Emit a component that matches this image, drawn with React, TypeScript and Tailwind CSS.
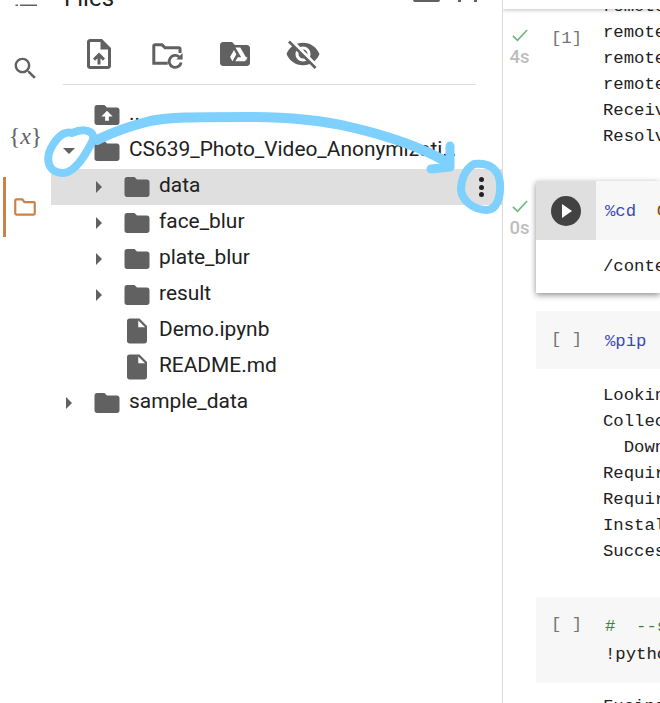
import React from 'react';

const ICON = '#616161';

function Icon({ d, size = 30, color = ICON }: { d: string; size?: number; color?: string }) {
  return (
    <svg width={size} height={size} viewBox="0 0 24 24" fill={color} className="shrink-0">
      <path d={d} />
    </svg>
  );
}

const FOLDER = 'M10 4H4c-1.1 0-2 .9-2 2v12c0 1.1.9 2 2 2h16c1.1 0 2-.9 2-2V8c0-1.1-.9-2-2-2h-8l-2-2z';
const FILE = 'M14 2H6c-1.1 0-2 .9-2 2v16c0 1.1.9 2 2 2h12c1.1 0 2-.9 2-2V8l-6-6zm-1 7V3.5L18.5 9H13z';
const UPLOAD = 'M14 2H6c-1.1 0-1.99.9-1.99 2L4 20c0 1.1.89 2 1.99 2H18c1.1 0 2-.9 2-2V8l-6-6zm4 18H6V4h7v5h5v11zM8 15.01l1.41 1.41L11 14.84V19h2v-4.16l1.59 1.59L16 15.01 12.01 11z';
const EYE_OFF = 'M12 7c2.76 0 5 2.24 5 5 0 .65-.13 1.26-.36 1.83l2.92 2.92c1.51-1.26 2.7-2.89 3.43-4.75-1.73-4.39-6-7.5-11-7.5-1.4 0-2.74.25-3.98.7l2.16 2.16C10.74 7.13 11.35 7 12 7zM2 4.27l2.28 2.28.46.46C3.08 8.3 1.78 10.02 1 12c1.73 4.39 6 7.5 11 7.5 1.55 0 3.03-.3 4.38-.84l.42.42L19.73 22 21 20.73 3.27 3 2 4.27zM7.53 9.8l1.55 1.55c-.05.21-.08.43-.08.65 0 1.66 1.34 3 3 3 .22 0 .44-.03.65-.08l1.55 1.55c-.67.33-1.41.53-2.2.53-2.76 0-5-2.24-5-5 0-.79.2-1.53.53-2.2zm4.31-.78l3.15 3.15.02-.16c0-1.66-1.34-3-3-3l-.17.01z';
const SEARCH = 'M15.5 14h-.79l-.28-.27C15.41 12.59 16 11.11 16 9.5 16 5.91 13.09 3 9.5 3S3 5.91 3 9.5 5.91 16 9.5 16c1.61 0 3.09-.59 4.23-1.57l.27.28v.79l5 4.99L20.49 19l-4.99-5zm-6 0C7.01 14 5 11.99 5 9.5S7.01 5 9.5 5 14 7.01 14 9.5 11.99 14 9.5 14z';

function Rail() {
  return (
    <div className="w-[51px] shrink-0 flex flex-col bg-white">
      <div className="h-[68px] mt-[-34px] flex items-center justify-center">
        <svg width="24" height="24" viewBox="0 0 24 24" fill={ICON}>
          <rect x="6" y="16.5" width="17" height="1.5" />
          <rect x="1.5" y="16.5" width="2.5" height="1.5" />
          <rect x="6" y="10" width="17" height="1.5" />
        </svg>
      </div>
      <div className="h-[68px] flex items-center justify-center">
        <Icon d={SEARCH} size={29} />
      </div>
      <div className="h-[68px] flex items-center justify-center">
        <span className="text-[24px] text-[#5f6368] font-['Liberation_Serif',serif]">
          {'{'}<span className="italic">x</span>{'}'}
        </span>
      </div>
      <div className="h-[60px] mt-[7px] ml-[3px] border-l-[3px] border-[#c9824a] flex items-center pl-[6px]">
        <svg width="26" height="26" viewBox="0 0 24 24" fill="none" stroke="#c9824a" strokeWidth="2">
          <path d="M3 7V6c0-.6.4-1 1-1h5.5l2 2.5H20c.6 0 1 .4 1 1V18c0 .6-.4 1-1 1H4c-.6 0-1-.4-1-1V7z" />
        </svg>
      </div>
    </div>
  );
}

function Toolbar() {
  return (
    <div className="flex items-center h-[36px] mt-[36px] ml-[14px]">
      <div className="w-[68px] flex justify-center">
        <Icon d={UPLOAD} size={36} />
      </div>
      <div className="w-[68px] flex justify-center">
        <svg width="36" height="36" viewBox="0 0 24 24" className="shrink-0">
          <path d="M12.5 18.2H3.2V6.8c0-.5.4-.9.9-.9h4.6l2 2h9.1c.5 0 .9.4.9.9v2.6" fill="none" stroke={ICON} strokeWidth="2" />
          <path d="M21.4 17.6a4 4 0 1 1-1.2-3.6" fill="none" stroke={ICON} strokeWidth="1.9" />
          <path d="M22.4 11.4v4.2h-4.2z" fill={ICON} />
        </svg>
      </div>
      <div className="w-[68px] flex justify-center">
        <svg width="36" height="36" viewBox="0 0 24 24" className="shrink-0">
          <path d={FOLDER} fill={ICON} />
          <path d="M12.3 7.6h3.2l4.7 8h-3.2zM11.3 9.4l1.6 2.8-2.6 4.6-1.6-2.8zM12.2 16.9l1.7-2.8h6.5l-1.7 2.8z" fill="#fff" />
        </svg>
      </div>
      <div className="w-[68px] flex justify-center">
        <Icon d={EYE_OFF} size={36} />
      </div>
    </div>
  );
}

function TreeRow({
  name,
  depth,
  kind,
  active,
}: {
  name: string;
  depth: number;
  kind: 'up' | 'open' | 'closed' | 'file';
  active?: boolean;
}) {
  return (
    <div className={`flex items-center h-9 ${active ? 'bg-[#dfdfdf]' : ''} ${depth === 1 ? 'pl-[39px]' : 'pl-[9px]'}`}>
      <div className="w-[18px] h-9 shrink-0 flex items-center justify-center">
        {kind === 'closed' && <div className="w-0 h-0 border-y-[6px] border-y-transparent border-l-[6px] border-l-[#616161]" />}
        {kind === 'open' && <div className="w-0 h-0 border-x-[6px] border-x-transparent border-t-[6px] border-t-[#616161]" />}
      </div>
      <div className="w-[14px] shrink-0" />
      <div className="relative w-[30px] h-[30px] shrink-0">
        <Icon d={kind === 'file' ? FILE : FOLDER} />
        {kind === 'up' && (
          <svg width="30" height="30" viewBox="0 0 24 24" className="absolute inset-0" fill="#fff">
            <path d="M12 8.5l-4.5 4.6h3v3.4h3v-3.4h3z" />
          </svg>
        )}
      </div>
      <span className={`ml-[7px] mb-[4px] text-[20.9px] leading-[28px] text-[#212121] truncate font-['Roboto',sans-serif] ${depth === 0 ? 'w-[328px]' : 'w-[300px]'}`}>{name}</span>
      {active && (
        <div className="flex flex-col gap-[2.5px] ml-[20px]">
          <div className="w-[5px] h-[5px] rounded-full bg-[#222]" />
          <div className="w-[5px] h-[5px] rounded-full bg-[#222]" />
          <div className="w-[5px] h-[5px] rounded-full bg-[#222]" />
        </div>
      )}
    </div>
  );
}

function FilesPanel() {
  return (
    <div className="w-[452px] shrink-0 flex flex-col border-r border-[#d8d8d8] bg-white">
      <div className="h-[0px] relative">
        <span className="block mt-[-16px] ml-[13px] text-[24px] leading-[28px] text-[#212121] font-['Roboto',sans-serif]">Files</span>
        <div className="absolute left-[362px] top-[-20px] w-[27px] h-[22px] border-2 border-[#616161] rounded-[2px]" />
        <div className="absolute left-[407px] top-0 w-[3px] h-[2px] bg-[#616161]" />
        <div className="absolute left-[423px] top-0 w-[3px] h-[2px] bg-[#616161]" />
      </div>
      <Toolbar />
      <div className="h-px bg-[#dadce0] mt-[12px] ml-[12px] mr-[26px]" />
      <div className="mt-[12px]">
        <TreeRow name=".." depth={0} kind="up" />
        <TreeRow name="CS639_Photo_Video_Anonymization" depth={0} kind="open" />
        <TreeRow name="data" depth={1} kind="closed" active />
        <TreeRow name="face_blur" depth={1} kind="closed" />
        <TreeRow name="plate_blur" depth={1} kind="closed" />
        <TreeRow name="result" depth={1} kind="closed" />
        <TreeRow name="Demo.ipynb" depth={1} kind="file" />
        <TreeRow name="README.md" depth={1} kind="file" />
        <TreeRow name="sample_data" depth={0} kind="closed" />
      </div>
    </div>
  );
}

function Status({ time }: { time: string }) {
  return (
    <div className="w-[33px] shrink-0 flex flex-col items-center">
      <svg width="20" height="20" viewBox="0 0 24 24" fill="none" stroke="#6dbb7a" strokeWidth="2">
        <path d="M3.5 13l5.5 5.5L20.5 6" />
      </svg>
      <span className="mt-[1px] text-[18.5px] leading-[22px] font-medium text-[#bdbdbd] font-['Roboto',sans-serif]">{time}</span>
    </div>
  );
}

function Output({ lines }: { lines: string[] }) {
  return (
    <pre className="ml-[67px] text-[17.3px] leading-[26px] text-[#212121] font-['Liberation_Mono',monospace]">
      {lines.join('\n')}
    </pre>
  );
}

function Prompt({ label }: { label: string }) {
  return (
    <div className="w-[60px] shrink-0 pl-[15px] text-[17.3px] text-[#757575] font-['Liberation_Mono',monospace]">
      {label}
    </div>
  );
}

function Notebook() {
  return (
    <div className="flex-1 min-w-0 flex flex-col overflow-hidden">
      <div className="h-[9px] shrink-0 bg-white relative z-10 shadow-[0_1px_4px_rgba(0,0,0,0.25)]" />

      <div className="flex mt-[-15px] h-[155px] shrink-0">
        <div className="pt-[31px]"><Status time="4s" /></div>
        <div className="flex-1 min-w-0 relative">
          <Output lines={['remote: Enumerating', 'remote: Counting', 'remote: Compressing', 'remote: Total', 'Receiving objects', 'Resolving deltas']} />
          <div className="absolute left-[15px] top-[32px] text-[17.3px] leading-[26px] text-[#757575] font-['Liberation_Mono',monospace]">[1]</div>
        </div>
      </div>

      <div className="flex mt-[32px] shrink-0">
        <div className="pt-[15px]"><Status time="0s" /></div>
        <div className="flex-1 min-w-0 bg-white shadow-[0_2px_6px_rgba(0,0,0,0.45)]">
          <div className="flex h-[59px]">
            <div className="w-[60px] shrink-0 bg-[#dfdfdf] flex items-center justify-center">
              <div className="w-[30px] h-[30px] rounded-full bg-[#424242] flex items-center justify-center pl-[2px]">
                <div className="w-0 h-0 border-y-[7px] border-y-transparent border-l-[10px] border-l-white" />
              </div>
            </div>
            <div className="flex-1 min-w-0 bg-[#f7f7f7] pl-[9px] pt-[2px] flex items-center whitespace-pre text-[17.3px] font-['Liberation_Mono',monospace]">
              <span className="text-[#3b4bb5]">%cd</span>
              <span className="text-[#8a4a12]">  CS639</span>
            </div>
          </div>
          <div className="h-[53px] flex items-center">
            <pre className="ml-[67px] text-[17.3px] text-[#212121] font-['Liberation_Mono',monospace]">/content</pre>
          </div>
        </div>
      </div>

      <div className="flex mt-[18px] shrink-0 ml-[33px] bg-[#f7f7f7] h-[58px] items-center">
        <Prompt label="[ ]" />
        <div className="pl-[9px] pt-[3px] whitespace-pre text-[17.3px] text-[#3b4bb5] font-['Liberation_Mono',monospace]">%pip  install</div>
      </div>

      <div className="mt-[14px] shrink-0 pl-[33px]">
        <Output lines={['Looking in', 'Collecting', '  Downloading', 'Requirement', 'Requirement', 'Installing', 'Successfully']} />
      </div>

      <div className="flex mt-[32px] shrink-0 ml-[33px] bg-[#f7f7f7] h-[86px] items-center">
        <div className="self-start pt-[15px]"><Prompt label="[ ]" /></div>
        <div className="pl-[9px] pt-[2px] text-[17.3px] leading-[28px] whitespace-pre font-['Liberation_Mono',monospace]">
          <div className="text-[#3f7f3f]">#  --save</div>
          <div className="text-[#212121]">!python</div>
        </div>
      </div>

      <div className="mt-[11px] shrink-0 pl-[33px]">
        <Output lines={['Fusing']} />
      </div>
    </div>
  );
}

function Annotations() {
  return (
    <svg className="absolute inset-0 pointer-events-none" width="660" height="703" viewBox="0 0 660 703" fill="none" stroke="#7ed0ff" strokeWidth="8" strokeLinecap="round" strokeLinejoin="round">
      <path strokeWidth="10" d="M97 140C115 131 130 126 150 121C170 117 190 117 250 117C285 117 320 120 350 127C385 135 420 147 445 161" />
      <path strokeWidth="9" d="M450 146L450 167L431 169" />
      <path d="M72 133C62 130 53 142 49 153C46 165 52 173 63 173C73 173 84 158 92 142C97 132 86 127 72 133Z" />
      <path d="M474 164C465 169 461 180 461 190C462 200 473 210 487 210C497 210 501 196 500 183C499 170 490 162 474 164Z" />
    </svg>
  );
}

export default function App() {
  return (
    <div className="relative w-[660px] h-[703px] overflow-hidden bg-white flex">
      <Rail />
      <FilesPanel />
      <Notebook />
      <Annotations />
    </div>
  );
}
